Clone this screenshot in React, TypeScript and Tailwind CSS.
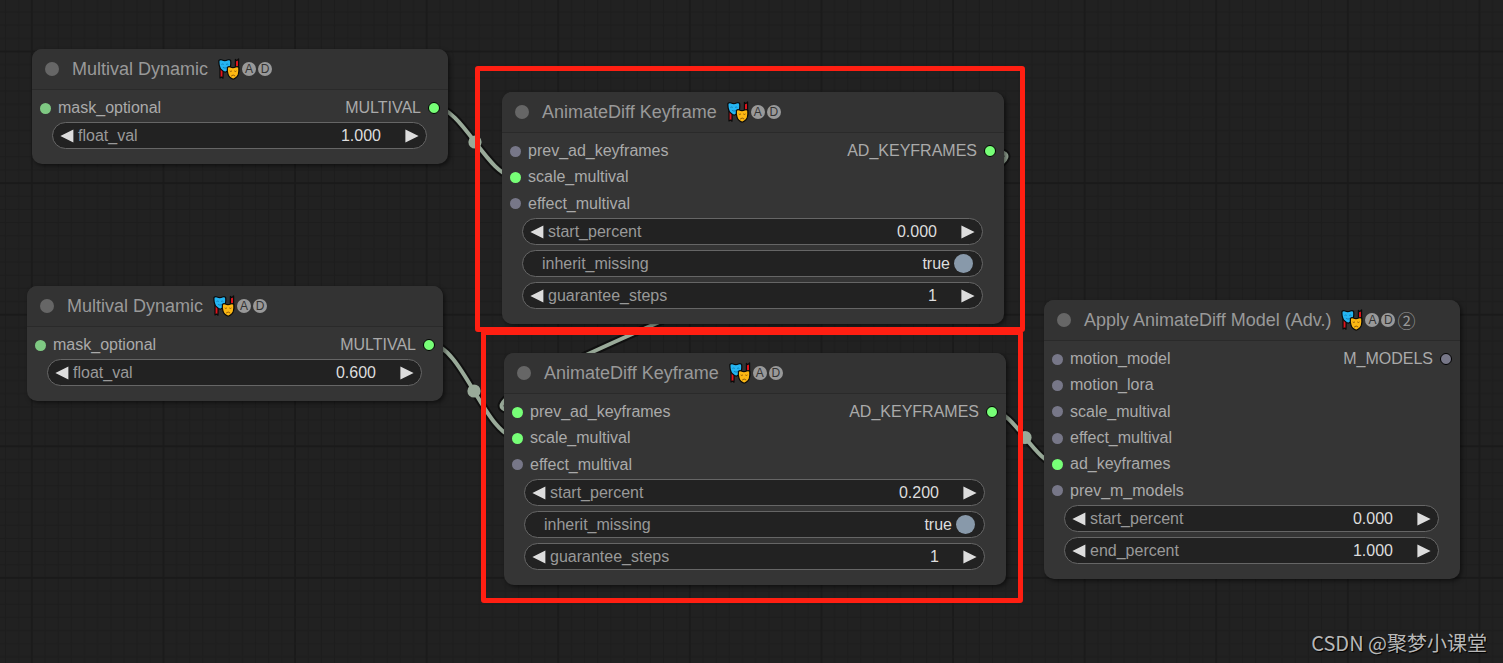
import React, { useId } from "react";

type Slot = { name: string; tone: "idle" | "soft" | "live" };
type Widget =
  | { kind: "number"; name: string; value: string }
  | { kind: "toggle"; name: string; value: boolean };

type NodeProps = {
  place: string;
  title: string;
  second?: boolean;
  inputs: Slot[];
  output: Slot;
  widgets: Widget[];
};

const SLOT_PITCH = 26.32;

const toneClass: Record<Slot["tone"], string> = {
  idle: "bg-[#777788]",
  soft: "bg-[#7fc983]",
  live: "bg-[#77ff77]",
};

function Masks() {
  return (
    <svg viewBox="0 0 22 22" className="h-[22px] w-[22px] shrink-0" aria-hidden="true">
      <g stroke="#0a0a0a" strokeWidth="1.2" strokeLinejoin="round">
        <path d="M2 8 L2 20 L3.6 19 L5 20.2 L5.2 10 Z" fill="#e0141c" />
        <path d="M17.4 1.4 L18.8 2.6 L20.6 1 L20.6 14 L17.4 12 Z" fill="#e0141c" />
        <path
          d="M1 2.4 Q2.6 1 4.2 2 Q6.8 3.4 9.4 2 Q11.2 1 12.6 2.4 Q13.2 6 12.2 9.2 Q11.6 12.4 7.2 14.2 Q2.6 12.4 1.8 9.2 Q0.6 6 1 2.4 Z"
          fill="#25b5f2"
        />
        <path
          d="M9.4 9.4 Q10.8 8.2 12.4 9 Q15 10.2 17.6 9 Q19.4 8 20.8 9.4 Q21.2 13 20.4 16.2 Q19.4 19.6 15.2 21.2 Q10.8 19.6 10 16.2 Q9 13 9.4 9.4 Z"
          fill="#fdb813"
        />
      </g>
      <g fill="none" strokeWidth="0.8" strokeLinecap="round">
        <path d="M3.8 6.2 Q4.6 5.6 5.4 6.2 M8.4 6.2 Q9.2 5.6 10 6.2 M5.2 9.6 Q7 11 8.8 9.6" stroke="#0f76ad" />
        <path d="M12 13.2 Q12.8 14 13.6 13.2 M16.6 13.2 Q17.4 14 18.2 13.2 M13.4 17.8 Q15.2 16 17 17.8" stroke="#7a4a08" />
      </g>
    </svg>
  );
}

function Badge({ children }: { children: React.ReactNode }) {
  return (
    <span className="flex h-[14px] w-[14px] items-center justify-center rounded-full bg-[#999] text-[12px] leading-[14px] text-[#333]">
      {children}
    </span>
  );
}

function Arrow({ side, label }: { side: "left" | "right"; label: string }) {
  return (
    <button type="button" aria-label={label} className="flex h-full w-[14px] shrink-0 items-center justify-center">
      <svg viewBox="0 0 14 14" className="h-[14px] w-[14px]" aria-hidden="true">
        <path d={side === "left" ? "M13.4 0.4V13.6L0.4 7Z" : "M0.4 0.4V13.6L13.6 7Z"} fill="#ddd" />
      </svg>
    </button>
  );
}

function WidgetRow({ widget }: { widget: Widget }) {
  const id = useId();
  const shell = "flex h-[27px] items-center rounded-full border border-[#666] bg-[#222] text-[16px] leading-[25px]";
  if (widget.kind === "toggle") {
    return (
      <div className={`${shell} pr-[9px] pl-[19px]`}>
        <label htmlFor={id} className="grow text-[#999]">
          {widget.name}
        </label>
        <span className="mr-[4px] text-[#ddd]">{String(widget.value)}</span>
        <input
          id={id}
          type="checkbox"
          defaultChecked={widget.value}
          className="h-[19px] w-[19px] shrink-0 appearance-none rounded-full bg-[#333] checked:bg-[#8899aa]"
        />
      </div>
    );
  }
  return (
    <div className={`${shell} px-[7px]`}>
      <Arrow side="left" label={`Decrease ${widget.name}`} />
      <label htmlFor={id} className="ml-[4px] text-[#999]">
        {widget.name}
      </label>
      <input
        id={id}
        type="text"
        inputMode="decimal"
        defaultValue={widget.value}
        className="mr-[24px] w-0 min-w-0 grow bg-transparent text-right text-[#ddd] outline-none"
      />
      <Arrow side="right" label={`Increase ${widget.name}`} />
    </div>
  );
}

function GraphNode({ place, title, second, inputs, output, widgets }: NodeProps) {
  return (
    <section className={`absolute rounded-[10px] bg-[#353535] shadow-[2px_2px_4px_rgba(0,0,0,0.5)] ${place}`}>
      <header className="flex h-[41px] items-center rounded-t-[10px] border-b border-[#2a2a2a] bg-[#333] pl-[13px]">
        <button type="button" aria-label={`Collapse ${title}`} className="h-[14px] w-[14px] rounded-full bg-[#666]" />
        <h2 className="ml-[13px] text-[18px] leading-[24px] whitespace-nowrap text-[#999]">{title}</h2>
        <div className="ml-[10px] flex items-center gap-[2px]">
          <Masks />
          <Badge>A</Badge>
          <Badge>D</Badge>
          {second && (
            <span className="font-['Noto_Sans_CJK_SC',sans-serif] text-[18px] leading-[24px] text-[#999]">②</span>
          )}
        </div>
      </header>
      <div className="flex justify-between px-[8px] pt-[5px] text-[16px] leading-[26px] text-[#aaa]">
        <ul className="grid auto-rows-fr" style={{ height: Math.round(inputs.length * SLOT_PITCH) }}>
          {inputs.map((slot) => (
            <li key={slot.name} className="flex items-center gap-[7px]">
              <span className={`h-[11px] w-[11px] rounded-full ${toneClass[slot.tone]}`} />
              {slot.name}
            </li>
          ))}
        </ul>
        <div className="flex h-[26px] items-center gap-[7px]">
          {output.name}
          <span className={`h-[12px] w-[12px] rounded-full border border-black ${toneClass[output.tone]}`} />
        </div>
      </div>
      <div className="mt-[1px] flex flex-col gap-[5px] pr-[21px] pb-[15px] pl-[20px]">
        {widgets.map((w) => (
          <WidgetRow key={w.name} widget={w} />
        ))}
      </div>
    </section>
  );
}

function Grid() {
  return (
    <svg className="absolute inset-0 h-full w-full" aria-hidden="true">
      <defs>
        <pattern
          id="grid"
          width="100"
          height="100"
          patternUnits="userSpaceOnUse"
          patternTransform="translate(163.4 51.5) scale(1.316)"
        >
          {[10, 20, 30, 40, 50, 60, 70, 80, 90].map((n) => (
            <path key={n} d={`M${n} 0V100M0 ${n}H100`} stroke="#1d1d1d" strokeWidth="0.9" />
          ))}
          <path d="M0 0V100M100 0V100M0 0H100M0 100H100" stroke="#1a1a1a" strokeWidth="1.4" />
        </pattern>
      </defs>
      <rect width="100%" height="100%" fill="url(#grid)" />
    </svg>
  );
}

type Point = [number, number];

const links: { from: Point; to: Point }[] = [
  { from: [435, 107], to: [515, 177] },
  { from: [430, 344], to: [518, 438] },
  { from: [990, 151], to: [518, 411] },
  { from: [993, 411], to: [1057, 464] },
];

function Links() {
  return (
    <svg className="absolute inset-0 h-full w-full" aria-hidden="true">
      {links.map(({ from: [x1, y1], to: [x2, y2] }) => {
        const bend = Math.hypot(x2 - x1, y2 - y1) / 4;
        const d = `M${x1} ${y1}C${x1 + bend} ${y1} ${x2 - bend} ${y2} ${x2} ${y2}`;
        return (
          <g key={d} fill="none">
            <path d={d} stroke="#000" strokeOpacity="0.5" strokeWidth="8" />
            <path d={d} stroke="#99aa99" strokeWidth="4" />
            <circle cx={(x1 + x2) / 2} cy={(y1 + y2) / 2} r="6.6" fill="#99aa99" />
          </g>
        );
      })}
    </svg>
  );
}

const keyframeWidgets = (start: string): Widget[] => [
  { kind: "number", name: "start_percent", value: start },
  { kind: "toggle", name: "inherit_missing", value: true },
  { kind: "number", name: "guarantee_steps", value: "1" },
];

const nodes: NodeProps[] = [
  {
    place: "left-[32px] top-[49px] w-[416px]",
    title: "Multival Dynamic",
    inputs: [{ name: "mask_optional", tone: "soft" }],
    output: { name: "MULTIVAL", tone: "live" },
    widgets: [{ kind: "number", name: "float_val", value: "1.000" }],
  },
  {
    place: "left-[27px] top-[286px] w-[416px]",
    title: "Multival Dynamic",
    inputs: [{ name: "mask_optional", tone: "soft" }],
    output: { name: "MULTIVAL", tone: "live" },
    widgets: [{ kind: "number", name: "float_val", value: "0.600" }],
  },
  {
    place: "left-[502px] top-[92px] w-[502px]",
    title: "AnimateDiff Keyframe",
    inputs: [
      { name: "prev_ad_keyframes", tone: "idle" },
      { name: "scale_multival", tone: "live" },
      { name: "effect_multival", tone: "idle" },
    ],
    output: { name: "AD_KEYFRAMES", tone: "live" },
    widgets: keyframeWidgets("0.000"),
  },
  {
    place: "left-[504px] top-[353px] w-[502px]",
    title: "AnimateDiff Keyframe",
    inputs: [
      { name: "prev_ad_keyframes", tone: "live" },
      { name: "scale_multival", tone: "live" },
      { name: "effect_multival", tone: "idle" },
    ],
    output: { name: "AD_KEYFRAMES", tone: "live" },
    widgets: keyframeWidgets("0.200"),
  },
  {
    place: "left-[1044px] top-[300px] w-[416px]",
    title: "Apply AnimateDiff Model (Adv.)",
    second: true,
    inputs: [
      { name: "motion_model", tone: "idle" },
      { name: "motion_lora", tone: "idle" },
      { name: "scale_multival", tone: "idle" },
      { name: "effect_multival", tone: "idle" },
      { name: "ad_keyframes", tone: "live" },
      { name: "prev_m_models", tone: "idle" },
    ],
    output: { name: "M_MODELS", tone: "idle" },
    widgets: [
      { kind: "number", name: "start_percent", value: "0.000" },
      { kind: "number", name: "end_percent", value: "1.000" },
    ],
  },
];

export default function App() {
  return (
    <main className="relative flex min-h-screen items-end justify-end overflow-hidden bg-[#212121] font-['Liberation_Sans',Arial,sans-serif]">
      <Grid />
      <Links />
      {nodes.map((node) => (
        <GraphNode key={node.place} {...node} />
      ))}
      <div className="pointer-events-none absolute top-[66px] left-[475px] h-[266px] w-[550px] rounded-[3px] border-[5px] border-[#ff1f12]" />
      <div className="pointer-events-none absolute top-[330px] left-[481px] h-[273px] w-[542px] rounded-[3px] border-[5px] border-[#ff1f12]" />
      <p className="relative px-[16px] pb-[6px] font-['Noto_Sans_CJK_SC',sans-serif] text-[20px] leading-[28px] text-[#b8b8b8] [text-shadow:1px_1px_1px_#000]">
        CSDN @聚梦小课堂
      </p>
    </main>
  );
}
